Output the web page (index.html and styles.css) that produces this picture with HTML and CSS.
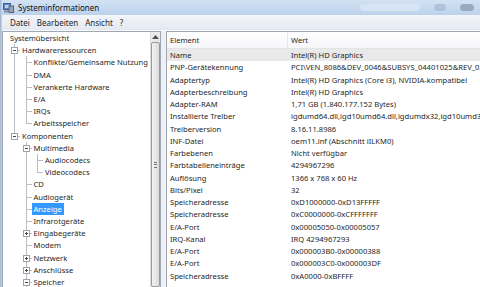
FILE: index.html
```html
<!DOCTYPE html>
<html lang="de">
<head>
    <meta charset="UTF-8">
    <title>Systeminformationen</title>
    <link rel="stylesheet" href="styles.css">
</head>
<body>

    <div class="window">
        <div class="titlebar">
            <svg class="app-icon" width="11" height="11" viewBox="0 0 11 11">
                <rect x="0.5" y="1.5" width="7" height="6" fill="#5d86c4" stroke="#3c5f96"/>
                <rect x="2" y="3" width="4" height="3" fill="#b9d3f2"/>
                <rect x="6" y="4" width="4.5" height="6.5" fill="#9aa5b4" stroke="#5b6474"/>
                <rect x="1" y="8.5" width="5" height="2" fill="#7f8a99"/>
            </svg>
            <span class="title">Systeminformationen</span>
            <div class="caption">
                <span class="blob b1"></span>
                <span class="blob b2"></span>
                <span class="blob b3"></span>
            </div>
        </div>

        <div class="menubar">
            <span class="menu-item">Datei</span>
            <span class="menu-item">Bearbeiten</span>
            <span class="menu-item">Ansicht</span>
            <span class="menu-item">?</span>
        </div>

        <div class="main">
            <div class="tree-pane">
                <div class="tree">
                    <div class="root">Systemübersicht</div>
                    <ul>
                        <li><span class="exp open"></span>Hardwareressourcen
                            <ul>
                                <li>Konflikte/Gemeinsame Nutzung</li>
                                <li>DMA</li>
                                <li>Verankerte Hardware</li>
                                <li>E/A</li>
                                <li>IRQs</li>
                                <li>Arbeitsspeicher</li>
                            </ul>
                        </li>
                        <li><span class="exp open"></span>Komponenten
                            <ul>
                                <li><span class="exp open"></span>Multimedia
                                    <ul>
                                        <li>Audiocodecs</li>
                                        <li>Videocodecs</li>
                                    </ul>
                                </li>
                                <li>CD</li>
                                <li>Audiogerät</li>
                                <li><span class="selected">Anzeige</span></li>
                                <li>Infrarotgeräte</li>
                                <li><span class="exp"></span>Eingabegeräte</li>
                                <li>Modem</li>
                                <li><span class="exp"></span>Netzwerk</li>
                                <li><span class="exp"></span>Anschlüsse</li>
                                <li class="more"><span class="exp open"></span>Speicher</li>
                            </ul>
                        </li>
                    </ul>
                </div>
                <div class="vscroll">
                    <div class="arrow">
                        <svg width="7" height="4" viewBox="0 0 7 4"><path d="M0 4 L3.5 0 L7 4 Z" fill="#4d4d4d"/></svg>
                    </div>
                    <div class="thumb"><span class="grip"></span></div>
                </div>
            </div>

            <div class="splitter"></div>

            <div class="list-pane">
                <div class="list-head">
                    <span class="col-el">Element</span>
                    <span class="col-val">Wert</span>
                </div>
                <div class="row current"><span class="col-el">Name</span><span class="col-val">Intel(R) HD Graphics</span></div>
                <div class="row"><span class="col-el">PNP-Gerätekennung</span><span class="col-val">PCI\VEN_8086&amp;DEV_0046&amp;SUBSYS_04401025&amp;REV_02\3&amp;21436425&amp;0&amp;10</span></div>
                <div class="row"><span class="col-el">Adaptertyp</span><span class="col-val">Intel(R) HD Graphics (Core i3), NVIDIA-kompatibel</span></div>
                <div class="row"><span class="col-el">Adapterbeschreibung</span><span class="col-val">Intel(R) HD Graphics</span></div>
                <div class="row"><span class="col-el">Adapter-RAM</span><span class="col-val">1,71 GB (1.840.177.152 Bytes)</span></div>
                <div class="row"><span class="col-el">Installierte Treiber</span><span class="col-val">igdumd64.dll,igd10umd64.dll,igdumdx32,igd10umd32</span></div>
                <div class="row"><span class="col-el">Treiberversion</span><span class="col-val">8.16.11.8986</span></div>
                <div class="row"><span class="col-el">INF-Datei</span><span class="col-val">oem11.inf (Abschnitt iILKM0)</span></div>
                <div class="row"><span class="col-el">Farbebenen</span><span class="col-val">Nicht verfügbar</span></div>
                <div class="row"><span class="col-el">Farbtabelleneinträge</span><span class="col-val">4294967296</span></div>
                <div class="row"><span class="col-el">Auflösung</span><span class="col-val">1366 x 768 x 60 Hz</span></div>
                <div class="row"><span class="col-el">Bits/Pixel</span><span class="col-val">32</span></div>
                <div class="row"><span class="col-el">Speicheradresse</span><span class="col-val">0xD1000000-0xD13FFFFF</span></div>
                <div class="row"><span class="col-el">Speicheradresse</span><span class="col-val">0xC0000000-0xCFFFFFFF</span></div>
                <div class="row"><span class="col-el">E/A-Port</span><span class="col-val">0x00005050-0x00005057</span></div>
                <div class="row"><span class="col-el">IRQ-Kanal</span><span class="col-val">IRQ 4294967293</span></div>
                <div class="row"><span class="col-el">E/A-Port</span><span class="col-val">0x000003B0-0x00000388</span></div>
                <div class="row"><span class="col-el">E/A-Port</span><span class="col-val">0x000003C0-0x000003DF</span></div>
                <div class="row"><span class="col-el">Speicheradresse</span><span class="col-val">0xA0000-0xBFFFF</span></div>
            </div>
        </div>
    </div>

</body>
</html>
```

FILE: styles.css
```css
body {
    margin: 0;
    font-family: "Noto Sans", "Open Sans", sans-serif;
    font-size: 7.6px;
    color: #1f1f1f;
    background-color: #c4d6ec;
    overflow: hidden;
}

.window {
    height: 287px;
    padding-left: 2px;
    background: linear-gradient(to right, #9fb3cb, #c7d7ea 2px);
    display: flex;
    flex-direction: column;
}

/* title bar */
.titlebar {
    height: 15px;
    display: flex;
    align-items: center;
    padding-left: 1px;
    background: linear-gradient(to bottom, #d2e2f3, #bcd2ec);
}

.app-icon {
    margin-right: 4px;
}

.title {
    color: #111;
    font-size: 8px;
}

.caption {
    margin-left: auto;
    display: flex;
    align-items: center;
    gap: 14px;
    padding-right: 6px;
}

.blob {
    display: block;
    height: 7px;
    border-radius: 4px;
    background-color: #d9e6f4;
    opacity: 0.8;
}

.b1 { width: 60px; }
.b2 { width: 12px; background-color: #a9bcd2; }
.b3 { width: 14px; background-color: #8f9db0; }

/* menu */
.menubar {
    height: 15px;
    display: flex;
    align-items: center;
    padding-left: 5px;
    font-size: 8px;
    background: linear-gradient(to bottom, #f3f5f9, #e4e9f1);
    border-bottom: 1px solid #f8f9fb;
}

.menu-item {
    padding: 0 3px;
    margin-right: 1px;
}

/* panes */
.main {
    flex: 1;
    display: flex;
    min-height: 0;
    background-color: #eef0f3;
}

.tree-pane {
    width: 157px;
    display: flex;
    background-color: white;
    border: 1px solid #9ea7b3;
    border-bottom: none;
    overflow: hidden;
}

.tree {
    flex: 1;
    overflow: hidden;
    white-space: nowrap;
}

.root {
    height: 12.2px;
    line-height: 12.2px;
    padding-left: 7px;
}

.tree ul {
    list-style: none;
    margin: 0;
    padding: 0;
}

.tree ul ul {
    margin-left: -7.5px;
}

.tree li {
    position: relative;
    padding-left: 19px;
    line-height: 12.2px;
}

/* guide lines */
.tree li::before {
    content: "";
    position: absolute;
    left: 11px;
    top: 0;
    bottom: 0;
    border-left: 1px solid #b9bec5;
}

.tree li:last-child::before {
    bottom: auto;
    height: 6px;
}

.tree li.more::before {
    height: auto;
    bottom: 0;
}

.tree li::after {
    content: "";
    position: absolute;
    left: 11px;
    top: 6px;
    width: 6px;
    border-top: 1px solid #b9bec5;
}

.exp {
    position: absolute;
    left: 8px;
    top: 3px;
    width: 5px;
    height: 5px;
    border: 1px solid #9aa3ad;
    background-color: white;
    z-index: 1;
}

.exp::before {
    content: "";
    position: absolute;
    left: 1px;
    top: 2px;
    width: 3px;
    height: 1px;
    background-color: #444;
}

.exp:not(.open)::after {
    content: "";
    position: absolute;
    left: 2px;
    top: 1px;
    width: 1px;
    height: 3px;
    background-color: #444;
}

.selected {
    background-color: #3399ff;
    color: white;
    padding: 1px 2px;
    margin-left: -2px;
}

/* scrollbar */
.vscroll {
    width: 9px;
    display: flex;
    flex-direction: column;
    background-color: #eaeaea;
    border-left: 1px solid #e0e0e0;
}

.arrow {
    height: 9px;
    display: flex;
    align-items: center;
    justify-content: center;
}

.thumb {
    flex: 1;
    margin: 1px 0 0 0;
    border: 1px solid #9a9a9a;
    border-radius: 2px;
    background: linear-gradient(to right, #f3f3f3, #dcdcdc);
    display: flex;
    align-items: center;
    justify-content: center;
}

.grip {
    width: 3px;
    height: 4px;
    border-top: 1px solid #777;
    border-bottom: 1px solid #777;
    background: linear-gradient(#777, #777) center / 3px 1px no-repeat;
}

.splitter {
    width: 5px;
    background-color: #eef0f3;
}

.list-pane {
    flex: 1;
    background-color: white;
    border: 1px solid #9ea7b3;
    border-right: none;
    border-bottom: none;
    overflow: hidden;
    white-space: nowrap;
}

.list-head {
    height: 16px;
    display: flex;
    align-items: center;
    border-bottom: 1px solid #e2e4e7;
    background: linear-gradient(to bottom, #ffffff, #f6f7f9);
}

.row {
    height: 12.25px;
    line-height: 12.25px;
    display: flex;
}

.row.current {
    background-color: #e9e9e9;
}

.col-el {
    width: 121px;
    flex-shrink: 0;
    padding-left: 3px;
    box-sizing: border-box;
}

.list-head .col-el {
    border-right: 1px solid #e6e8eb;
    height: 16px;
    line-height: 16px;
}

.col-val {
    padding-left: 3px;
}
```
